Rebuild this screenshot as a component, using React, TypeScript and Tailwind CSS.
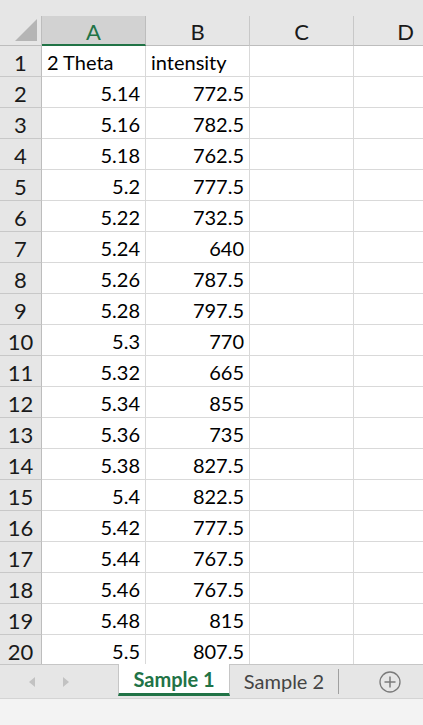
import React from 'react';

const rows: [string, string][] = [
  ['5.14', '772.5'],
  ['5.16', '782.5'],
  ['5.18', '762.5'],
  ['5.2', '777.5'],
  ['5.22', '732.5'],
  ['5.24', '640'],
  ['5.26', '787.5'],
  ['5.28', '797.5'],
  ['5.3', '770'],
  ['5.32', '665'],
  ['5.34', '855'],
  ['5.36', '735'],
  ['5.38', '827.5'],
  ['5.4', '822.5'],
  ['5.42', '777.5'],
  ['5.44', '767.5'],
  ['5.46', '767.5'],
  ['5.48', '815'],
  ['5.5', '807.5'],
];

const font = { fontFamily: 'Lato, "Noto Sans", sans-serif' };

function RowHeader({ n }: { n: number }) {
  return (
    <div className="w-[42px] shrink-0 h-full flex items-center justify-center pt-[2px] bg-[#e6e6e6] border-r border-[#bdbdbd] border-b border-b-[#c8c8c8] text-[22px] text-[#1a1a1a]">
      {n}
    </div>
  );
}

function Cell({ children, right }: { children?: React.ReactNode; right?: boolean }) {
  return (
    <div
      className={`w-[104px] shrink-0 h-full flex items-center px-[5px] pt-[2px] border-r border-b border-[#d9d9d9] text-[20px] text-black whitespace-nowrap ${right ? 'justify-end' : 'justify-start'}`}
    >
      {children}
    </div>
  );
}

export default function App() {
  return (
    <div className="w-[423px] h-[725px] flex flex-col overflow-hidden bg-white" style={font}>
      {/* Grid */}
      <div className="h-[664px] shrink-0 overflow-hidden flex flex-col">
        <div className="h-[16px] shrink-0 bg-[#e6e6e6]" />
        {/* column headers */}
        <div className="h-[30px] shrink-0 flex">
          <div className="w-[42px] shrink-0 h-full bg-[#e6e6e6] border-r border-[#bdbdbd] border-b border-b-[#bdbdbd] relative">
            <svg className="absolute right-[4px] bottom-[4px]" width="22" height="22" viewBox="0 0 22 22">
              <polygon points="22,0 22,22 0,22" fill="#b5b5b5" />
            </svg>
          </div>
          <div className="w-[104px] shrink-0 h-full flex items-center justify-center pt-[2px] bg-[#d2d2d2] border-r border-[#bdbdbd] border-b-2 border-b-[#217346] text-[22px] text-[#217346]">
            A
          </div>
          {['B', 'C', 'D'].map((c) => (
            <div
              key={c}
              className="w-[104px] shrink-0 h-full flex items-center justify-center pt-[2px] bg-[#e6e6e6] border-r border-[#c8c8c8] border-b border-b-[#bdbdbd] text-[22px] text-[#1a1a1a]"
            >
              {c}
            </div>
          ))}
        </div>
        {/* row 1 */}
        <div className="h-[31px] shrink-0 flex">
          <RowHeader n={1} />
          <Cell>2 Theta</Cell>
          <Cell>intensity</Cell>
          <Cell />
          <Cell />
        </div>
        {rows.map(([a, b], i) => (
          <div key={i} className="h-[31px] shrink-0 flex">
            <RowHeader n={i + 2} />
            <Cell right>{a}</Cell>
            <Cell right>{b}</Cell>
            <Cell />
            <Cell />
          </div>
        ))}
      </div>

      {/* Sheet tabs */}
      <div className="h-[34px] shrink-0 flex bg-[#e6e6e6] border-t border-[#c6c6c6]">
        <div className="w-[118px] shrink-0 flex items-center pl-[29px] gap-[28px]">
          <svg width="6" height="10" viewBox="0 0 6 10">
            <polygon points="6,0 6,10 0,5" fill="#c2c2c2" />
          </svg>
          <svg width="6" height="10" viewBox="0 0 6 10">
            <polygon points="0,0 0,10 6,5" fill="#c2c2c2" />
          </svg>
        </div>
        <div className="w-[112px] shrink-0 -mt-px h-[32px] bg-white border-l border-r border-[#c6c6c6] border-b-[3px] border-b-[#217346] flex items-center justify-center pt-[1px] text-[20px] font-bold text-[#217346]">
          Sample 1
        </div>
        <div className="w-[109px] shrink-0 flex items-center justify-center pb-[2px] text-[20px] text-[#444] border-r border-[#a0a0a0] my-[4px]">
          Sample 2
        </div>
        <div className="flex-1 flex items-center justify-center pl-[18px]">
          <svg width="22" height="22" viewBox="0 0 22 22">
            <circle cx="11" cy="11" r="10" fill="none" stroke="#7a7a7a" strokeWidth="1.3" />
            <line x1="11" y1="5.5" x2="11" y2="16.5" stroke="#7a7a7a" strokeWidth="1.5" />
            <line x1="5.5" y1="11" x2="16.5" y2="11" stroke="#7a7a7a" strokeWidth="1.5" />
          </svg>
        </div>
      </div>

      {/* status bar */}
      <div className="flex-1 bg-[#f3f3f3] border-t border-[#d4d4d4]" />
    </div>
  );
}
